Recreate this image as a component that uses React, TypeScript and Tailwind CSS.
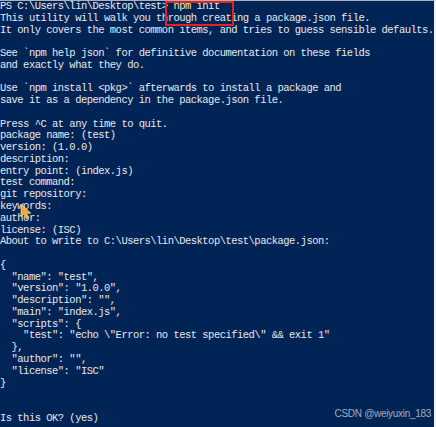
const lines = [
  'This utility will walk you through creating a package.json file.',
  'It only covers the most common items, and tries to guess sensible defaults.',
  '',
  'See `npm help json` for definitive documentation on these fields',
  'and exactly what they do.',
  '',
  'Use `npm install <pkg>` afterwards to install a package and',
  'save it as a dependency in the package.json file.',
  '',
  'Press ^C at any time to quit.',
  'package name: (test)',
  'version: (1.0.0)',
  'description:',
  'entry point: (index.js)',
  'test command:',
  'git repository:',
  'keywords:',
  'author:',
  'license: (ISC)',
  'About to write to C:\\Users\\lin\\Desktop\\test\\package.json:',
  '',
  '{',
  '  "name": "test",',
  '  "version": "1.0.0",',
  '  "description": "",',
  '  "main": "index.js",',
  '  "scripts": {',
  '    "test": "echo \\"Error: no test specified\\" && exit 1"',
  '  },',
  '  "author": "",',
  '  "license": "ISC"',
  '}',
  '',
  '',
  'Is this OK? (yes)',
];

function Cursor() {
  return (
    <svg width="13" height="17" viewBox="0 0 13 17" className="absolute left-[20px] top-[202px]">
      <path
        d="M1 1 L1 14 L4.2 11 L6.6 16 L8.8 15 L6.5 10.2 L10.8 10.2 Z"
        fill="#f2a93b"
        stroke="#fbd27a"
        strokeWidth="0.8"
        strokeLinejoin="round"
      />
    </svg>
  );
}

export default function App() {
  return (
    <div className="relative w-[436px] h-[427px] overflow-hidden bg-[#012456] border-t border-t-[#aab0bc] border-r-2 border-r-[#f4f4f4]">
      <pre className="m-0 pt-0 pl-0 font-['Liberation_Mono','DejaVu_Sans_Mono',monospace] text-[10.5px] leading-[11.77px] tracking-[-0.52px] text-[#e8e8ec] whitespace-pre">
        <div>
          PS C:\Users\lin\Desktop\test&gt; <span className="text-[#f4f0a4]">npm</span>{' '}
          <span className="text-[#eeecd6]">init</span>
        </div>
        {lines.map((line, idx) => (
          <div key={idx} className="h-[11.77px]">
            {line}
          </div>
        ))}
      </pre>

      {/* highlight box */}
      <div className="absolute left-[165px] top-[0px] w-[69px] h-[25px] border-2 border-[#e5231d]" />

      <Cursor />

      <div className="absolute right-[3px] bottom-[6px] font-['Liberation_Sans',Arial,sans-serif] text-[10px] tracking-[-0.3px] text-[#a3abbb]">
        CSDN @weiyuxin_183
      </div>
    </div>
  );
}
